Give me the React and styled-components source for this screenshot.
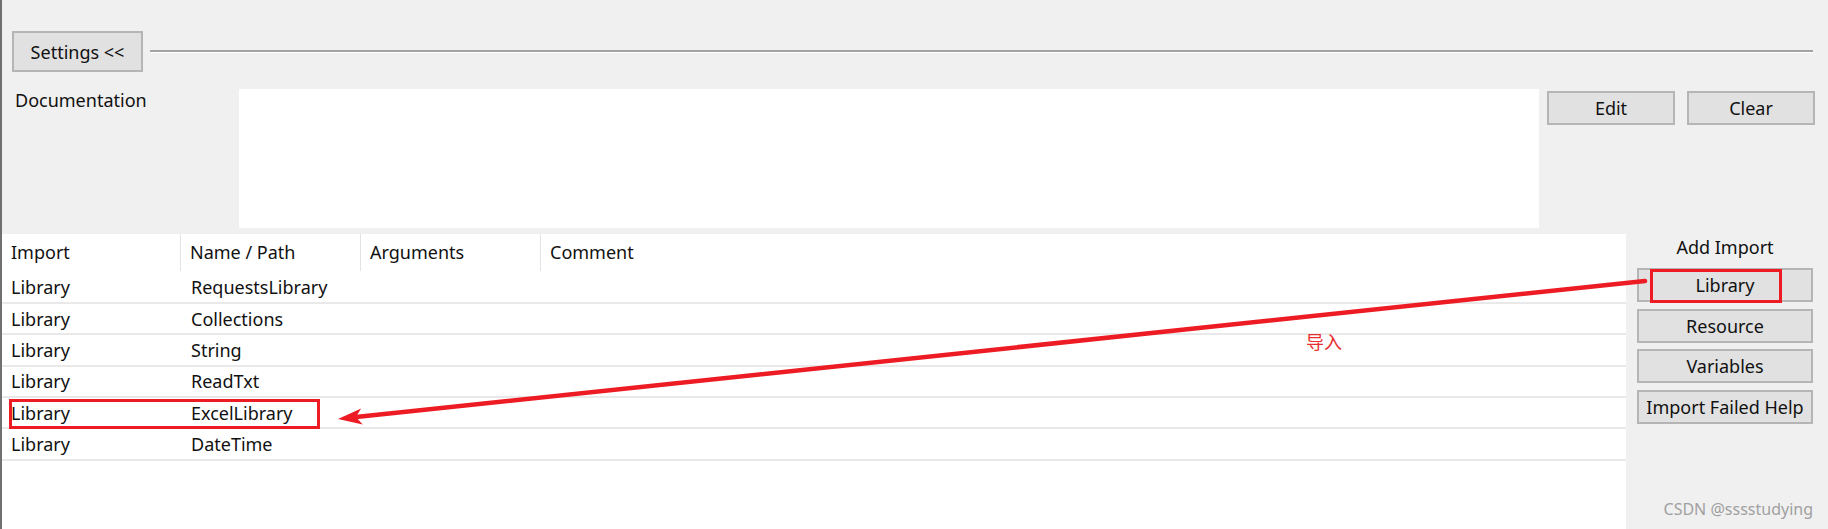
import React from "react";
import styled, { createGlobalStyle } from "styled-components";

const GlobalStyle = createGlobalStyle`
  html, body {
    margin: 0;
    padding: 0;
    background: #f0f0f0;
  }
  body {
    font-family: "Noto Sans", "Open Sans", sans-serif;
  }
`;

const imports = [
  { type: "Library", name: "RequestsLibrary" },
  { type: "Library", name: "Collections" },
  { type: "Library", name: "String" },
  { type: "Library", name: "ReadTxt" },
  { type: "Library", name: "ExcelLibrary" },
  { type: "Library", name: "DateTime" },
];

const columns = ["Import", "Name / Path", "Arguments", "Comment"];
const addButtons = ["Library", "Resource", "Variables", "Import Failed Help"];

const App = () => {
  return (
    <>
      <GlobalStyle />
      <Page>
        <Window>
          <SettingsBar>
            <PushButton $w={131} $h={41}>
              Settings &lt;&lt;
            </PushButton>
            <Groove />
          </SettingsBar>

          <DocRow>
            <DocLabel>Documentation</DocLabel>
            <DocBox />
            <DocButtons>
              <PushButton $w={128}>Edit</PushButton>
              <PushButton $w={128}>Clear</PushButton>
            </DocButtons>
          </DocRow>

          <Main>
            <Table>
              <HeaderRow>
                {columns.map((c) => (
                  <HeaderCell key={c}>{c}</HeaderCell>
                ))}
              </HeaderRow>
              {imports.map((row) => (
                <Row key={row.name}>
                  <Cell>{row.type}</Cell>
                  <Cell>{row.name}</Cell>
                  <Cell />
                  <Cell />
                </Row>
              ))}
            </Table>

            <SidePanel>
              <SideLabel>Add Import</SideLabel>
              <ButtonStack>
                {addButtons.map((b) => (
                  <PushButton key={b}>{b}</PushButton>
                ))}
              </ButtonStack>
            </SidePanel>
          </Main>
        </Window>

        {/* red annotations drawn over the screenshot */}
        <Annotation viewBox="0 0 1828 529">
          <rect x="10.5" y="400.5" width="308" height="27" fill="none" stroke="#ed1c24" strokeWidth="3" />
          <rect x="1651.5" y="270.5" width="129" height="31" fill="none" stroke="#ed1c24" strokeWidth="3" />
          <line x1="1645" y1="281" x2="356" y2="417" stroke="#ed1c24" strokeWidth="4.5" strokeLinecap="round" />
          <polygon points="338,419 361.1,408.5 355.9,417.1 362.7,424.5" fill="#ed1c24" />
        </Annotation>
        <NoteText>导入</NoteText>
        <Watermark>CSDN @sssstudying</Watermark>
      </Page>
    </>
  );
};

const Page = styled.div`
  position: relative;
  width: 1828px;
  height: 529px;
  overflow: hidden;
`;

const Window = styled.div`
  box-sizing: border-box;
  width: 100%;
  height: 100%;
  border-left: 2px solid #707070;
  background: #f0f0f0;
  display: flex;
  flex-direction: column;
  color: #111111;
  font-size: 18px;
`;

const SettingsBar = styled.div`
  display: flex;
  align-items: center;
  gap: 7px;
  padding: 31px 15px 0 10px;
`;

const PushButton = styled.button`
  box-sizing: border-box;
  width: ${({ $w }) => ($w ? `${$w}px` : "100%")};
  height: ${({ $h }) => $h || 34}px;
  padding: 0;
  background: #e1e1e1;
  border: 2px solid #b5b5b5;
  border-radius: 0;
  font-family: inherit;
  font-size: 18px;
  line-height: 1;
  color: #111111;
  display: flex;
  align-items: center;
  justify-content: center;
  white-space: nowrap;
`;

const Groove = styled.div`
  flex: 1;
  height: 2px;
  margin-top: -1px;
  background: #a3a3a3;
  border-bottom: 1px solid #ffffff;
`;

const DocRow = styled.div`
  display: flex;
  margin-top: 17px;
  height: 139px;
`;

const DocLabel = styled.div`
  width: 237px;
  box-sizing: border-box;
  padding-left: 13px;
  line-height: 22px;
`;

const DocBox = styled.div`
  width: 1300px;
  background: #ffffff;
`;

const DocButtons = styled.div`
  display: flex;
  align-items: flex-start;
  gap: 12px;
  padding: 2px 0 0 8px;
`;

const Main = styled.div`
  display: flex;
  flex: 1;
  min-height: 0;
  margin-top: 6px;
`;

const Table = styled.div`
  width: 1624px;
  background: #ffffff;
  display: flex;
  flex-direction: column;
`;

const gridCols = "179px 180px 180px 1fr";

const HeaderRow = styled.div`
  display: grid;
  grid-template-columns: ${gridCols};
  height: 38.5px;
`;

const HeaderCell = styled.div`
  display: flex;
  align-items: center;
  padding-left: 9px;
  margin-bottom: 2px;
  border-right: 1px solid #e3e3e3;

  &:last-child {
    border-right: none;
  }
`;

const Row = styled.div`
  box-sizing: border-box;
  display: grid;
  grid-template-columns: ${gridCols};
  align-items: center;
  height: 31.4px;
  border-bottom: 2px solid #e9e9e9;
`;

const Cell = styled.div`
  padding-left: 9px;
  white-space: nowrap;

  &:nth-child(2) {
    padding-left: 10px;
  }
`;

const SidePanel = styled.div`
  flex: 1;
  display: flex;
  flex-direction: column;
  padding: 2px 15px 0 11px;
`;

const SideLabel = styled.div`
  text-align: center;
  line-height: 22px;
  margin-bottom: 10px;
`;

const ButtonStack = styled.div`
  display: flex;
  flex-direction: column;
  gap: 6.5px;
`;

const Annotation = styled.svg`
  position: absolute;
  inset: 0;
  width: 1828px;
  height: 529px;
  pointer-events: none;
`;

const NoteText = styled.span`
  position: absolute;
  left: 1306px;
  top: 332px;
  font-family: "Noto Sans CJK SC", "Noto Sans", sans-serif;
  font-size: 18px;
  line-height: 18px;
  color: #e8302f;
`;

const Watermark = styled.span`
  position: absolute;
  right: 15px;
  top: 502px;
  font-family: "Noto Sans", sans-serif;
  font-size: 16px;
  line-height: 15px;
  color: #a0a0a0;
`;

export default App;
